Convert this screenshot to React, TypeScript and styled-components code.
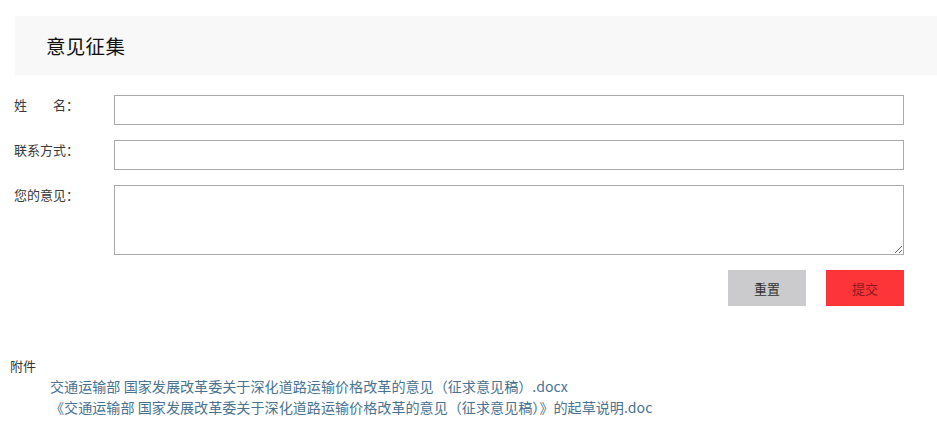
import styled, { createGlobalStyle } from 'styled-components';

const GlobalStyle = createGlobalStyle`
  body {
    margin: 0;
    background-color: #ffffff;
    font-family: "Noto Sans CJK SC", "Liberation Sans", sans-serif;
    color: #333333;
  }
`;

interface Interface_FormRow {
  label: string;
  multiline?: boolean;
}

const FormRow = ({ label, multiline }: Interface_FormRow) => {
  return (
    <DivRow>
      <LabelField>{label}</LabelField>
      {multiline ? <TextareaField /> : <InputField type="text" />}
    </DivRow>
  );
};

const attachments = [
  '交通运输部 国家发展改革委关于深化道路运输价格改革的意见（征求意见稿）.docx',
  '《交通运输部 国家发展改革委关于深化道路运输价格改革的意见（征求意见稿）》的起草说明.doc',
];

export default function App() {
  return (
    <DivPage>
      <GlobalStyle />
      <DivHeader>
        <TitleText>意见征集</TitleText>
      </DivHeader>
      <FormBody>
        <FormRow label="姓　　名：" />
        <FormRow label="联系方式：" />
        <FormRow label="您的意见：" multiline />
        <DivButtons>
          <ButtonAction $variant="reset" type="button">重置</ButtonAction>
          <ButtonAction $variant="submit" type="button">提交</ButtonAction>
        </DivButtons>
      </FormBody>
      <DivAttachments>
        <SpanAttachTitle>附件</SpanAttachTitle>
        <DivLinks>
          {attachments.map((name) => (
            <LinkFile key={name} href="#">
              {name}
            </LinkFile>
          ))}
        </DivLinks>
      </DivAttachments>
    </DivPage>
  );
}

const DivPage = styled.div`
  width: 937px;
  padding-top: 16px;
  box-sizing: border-box;
`;

const DivHeader = styled.div`
  display: flex;
  align-items: center;
  margin-left: 15px;
  height: 59px;
  padding-left: 31px;
  background-color: #f8f8f9;
`;

const TitleText = styled.h2`
  margin: 0;
  font-size: 19.5px;
  font-weight: 400;
  color: #111111;
  letter-spacing: 0.3px;
`;

const FormBody = styled.form`
  display: flex;
  flex-direction: column;
  gap: 15px;
  margin-top: 20px;
  padding-left: 14px;
  width: 904px;
  box-sizing: border-box;
`;

const DivRow = styled.div`
  display: flex;
  align-items: flex-start;
`;

const LabelField = styled.label`
  width: 100px;
  flex-shrink: 0;
  font-size: 13px;
  line-height: 20px;
  color: #3a3a3a;
  white-space: pre;
`;

const InputField = styled.input`
  flex: 1;
  height: 30px;
  box-sizing: border-box;
  border: 1px solid #a9a9a9;
  outline: none;
  padding: 0 6px;
  font-size: 13px;
  background-color: #ffffff;
`;

const TextareaField = styled.textarea`
  flex: 1;
  height: 70px;
  box-sizing: border-box;
  border: 1px solid #a9a9a9;
  outline: none;
  padding: 4px 6px;
  font-size: 13px;
  resize: both;
  background-color: #ffffff;
`;

const DivButtons = styled.div`
  display: flex;
  justify-content: flex-end;
  gap: 20px;
`;

const ButtonAction = styled.button<{ $variant: 'reset' | 'submit' }>`
  width: 78px;
  height: 36px;
  border: none;
  cursor: pointer;
  font-family: "Noto Sans CJK SC", "Liberation Sans", sans-serif;
  font-size: 13px;
  background-color: ${(props) => (props.$variant === 'submit' ? '#fd3438' : '#cbcbcd')};
  color: ${(props) => (props.$variant === 'submit' ? '#8e1a1c' : '#333333')};
`;

const DivAttachments = styled.div`
  display: flex;
  flex-direction: column;
  margin-top: 50px;
  padding-left: 10px;
`;

const SpanAttachTitle = styled.span`
  font-size: 13px;
  line-height: 20px;
  color: #333333;
`;

const DivLinks = styled.div`
  display: flex;
  flex-direction: column;
  padding-left: 40px;
`;

const LinkFile = styled.a`
  font-size: 14.1px;
  line-height: 21px;
  color: #4a7393;
  text-decoration: none;
  white-space: nowrap;
`;
